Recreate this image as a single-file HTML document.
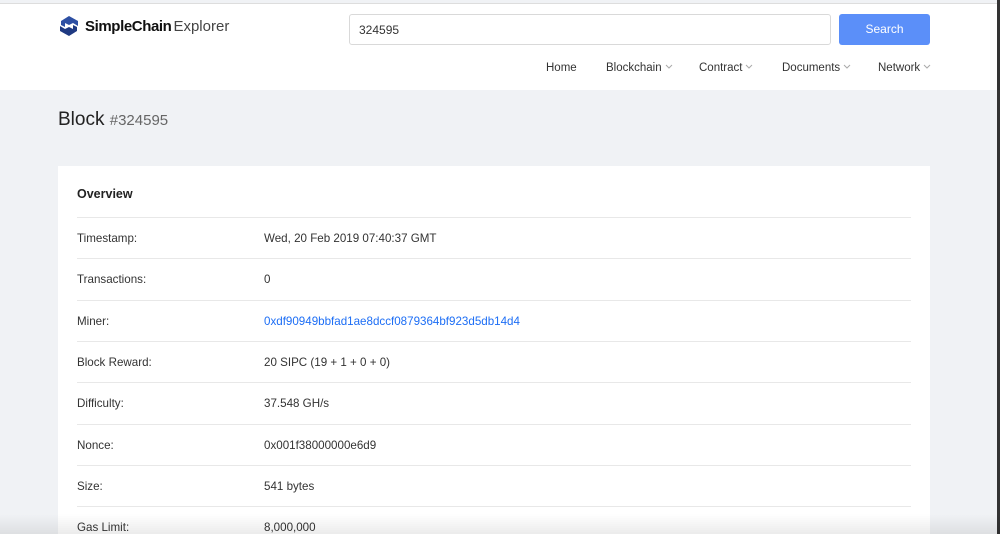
<!DOCTYPE html>
<html><head><style>
*{margin:0;padding:0;box-sizing:border-box}
html,body{width:1000px;height:534px;overflow:hidden}
body{background:#f0f2f5;font-family:"Liberation Sans",sans-serif;position:relative}
.hdr{position:absolute;left:0;top:3px;width:997px;height:87px;background:#fff;border-top:1px solid #ddd}
.logo{position:absolute;left:58px;top:11px;display:flex;align-items:center}
.logo b{font-size:15px;color:#111;margin-left:5px;letter-spacing:-0.4px}
.logo span{font-size:15px;color:#444;margin-left:2px}
.search{position:absolute;left:349px;top:10px;width:482px;height:31px;border:1px solid #d9d9d9;border-radius:3px;font-size:12px;color:#333;padding:8px 9px}
.btn{position:absolute;left:839px;top:10px;width:91px;height:31px;background:#5b8ff9;border-radius:3px;color:#fff;font-size:12px;text-align:center;line-height:31px}
.nav{position:absolute;top:58px;font-size:11.5px;color:#333}
.nav svg{margin-left:3px;vertical-align:2px}
h1{position:absolute;left:58px;top:109px;font-size:19px;font-weight:normal;color:#222}
h1 small{font-size:15px;color:#666}
.card{position:absolute;left:58px;top:166px;width:872px;height:368px;background:#fff;overflow:hidden}
.ov{position:absolute;left:19px;top:21px;font-size:12.5px;font-weight:bold;color:#222}
.row{position:absolute;left:19px;width:834px;height:41px;border-top:1px solid #e8e8e8;font-size:11.6px;color:#333}
.row .k{position:absolute;left:0;top:14px}
.row .v{position:absolute;left:187px;top:14px}
.rb{position:absolute;left:997px;top:0;width:3px;height:534px;background:#333}
.shade{position:absolute;left:0;top:514px;width:1000px;height:20px;background:linear-gradient(rgba(0,0,0,0),rgba(0,0,0,0.08))}
</style></head><body>
<div class="hdr">
<div class="logo"><svg width="22" height="22" viewBox="0 0 22 22"><path d="M11 1 L20 6 L20 11 L15 8 L11 10 L7 8 L7 12 L3 10 L3 6Z" fill="#2d4fa3"/><path d="M11 21 L2 16 L2 11 L7 14 L11 12 L15 14 L15 10 L19 12 L19 16Z" fill="#1f3a82"/></svg><b>SimpleChain</b><span>Explorer</span></div>
<div class="search">324595</div>
<div class="btn">Search</div>
<div class="nav" style="left:546px">Home</div>
<div class="nav" style="left:606px">Blockchain<svg width="8" height="5"><path d="M1 1L4 4L7 1" stroke="#aaa" fill="none"/></svg></div>
<div class="nav" style="left:699px">Contract<svg width="8" height="5"><path d="M1 1L4 4L7 1" stroke="#aaa" fill="none"/></svg></div>
<div class="nav" style="left:782px">Documents<svg width="8" height="5"><path d="M1 1L4 4L7 1" stroke="#aaa" fill="none"/></svg></div>
<div class="nav" style="left:878px">Network<svg width="8" height="5"><path d="M1 1L4 4L7 1" stroke="#aaa" fill="none"/></svg></div>
</div>
<h1>Block <small>#324595</small></h1>
<div class="card">
<div class="ov">Overview</div>
<div class="row" style="top:51px"><span class="k">Timestamp:</span><span class="v">Wed, 20 Feb 2019 07:40:37 GMT</span></div>
<div class="row" style="top:92px"><span class="k">Transactions:</span><span class="v">0</span></div>
<div class="row" style="top:134px"><span class="k">Miner:</span><span class="v" style="color:#1d6ef5">0xdf90949bbfad1ae8dccf0879364bf923d5db14d4</span></div>
<div class="row" style="top:175px"><span class="k">Block Reward:</span><span class="v">20 SIPC (19 + 1 + 0 + 0)</span></div>
<div class="row" style="top:216px"><span class="k">Difficulty:</span><span class="v">37.548 GH/s</span></div>
<div class="row" style="top:258px"><span class="k">Nonce:</span><span class="v">0x001f38000000e6d9</span></div>
<div class="row" style="top:299px"><span class="k">Size:</span><span class="v">541 bytes</span></div>
<div class="row" style="top:340px"><span class="k">Gas Limit:</span><span class="v">8,000,000</span></div>
</div>
<div class="rb"></div>
<div class="shade"></div>
</body></html>
